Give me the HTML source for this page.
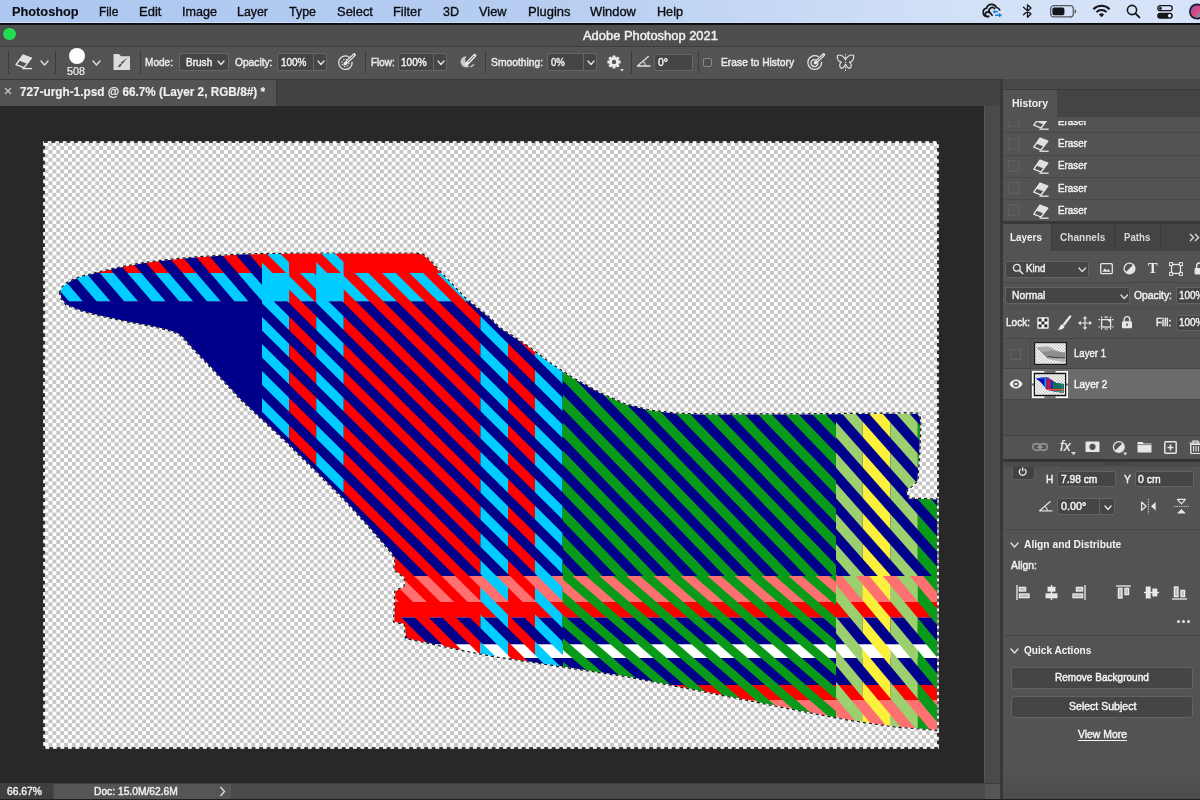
<!DOCTYPE html><html><head><meta charset="utf-8"><title>Adobe Photoshop 2021</title><style>
*{box-sizing:border-box;margin:0;padding:0}
html,body{width:1200px;height:800px;overflow:hidden;background:#535353;font-family:"Liberation Sans",sans-serif;color:#e4e4e4;font-size:11px}
.abs{position:absolute}
.t{position:absolute;white-space:nowrap;line-height:1;transform-origin:0 50%}
#menubar{position:absolute;left:0;top:0;width:1200px;height:23px;background:linear-gradient(90deg,#acc7f0 0%,#b6cdf1 45%,#d3e1f7 80%,#d6e3f8 100%);color:#111}
#menubar .t{font-size:13.2px;top:5px;color:#0c0c10}
#menuline{position:absolute;left:0;top:21.5px;width:1200px;height:3.5px;background:linear-gradient(#cfe0f8 0,#cfe0f8 40%,#0c0c10 46%,#141414 100%)}
#titlebar{position:absolute;left:0;top:25px;width:1200px;height:21px;background:#4e4e4e}
#optbar{position:absolute;left:0;top:46px;width:1200px;height:33px;background:#535353;border-top:1px solid #3e3e3e}
#tabbar{position:absolute;left:0;top:79px;width:1001px;height:27px;background:#434343;border-top:1px solid #3a3a3a}
#doctab{position:absolute;left:0;top:79px;width:277px;height:27px;background:#535353;border-right:1px solid #383838;border-top:1px solid #3a3a3a}
#canvasbg{position:absolute;left:0;top:106px;width:984px;height:677px;background:#282828}
#vscroll{position:absolute;left:984px;top:106px;width:17px;height:677px;background:#4a4a4a;border-left:1px solid #585858}
#statusbar{position:absolute;left:0;top:783px;width:1001px;height:17px;background:#4a4a4a;border-top:1px solid #3c3c3c}
#psep{position:absolute;left:1000px;top:79px;width:3px;height:721px;background:#383838}
.box{position:absolute;background:#454545;border:1px solid #666;border-radius:2px}
.sep{position:absolute;width:1px;background:#3d3d3d}
.hl{position:absolute;height:1px;background:#3f3f3f}


.ptabbar{position:absolute;left:1003px;width:197px;background:#444}
.ptab{position:absolute;background:#535353}
.hrow{position:absolute;left:1003px;width:197px;height:22px;border-bottom:1px solid #4a4a4a}
.hchk{position:absolute;left:1008px;width:12px;height:12px;border:1px solid #606060;background:#545454}
.ibox{position:absolute;background:#454545;border:1px solid #636363;border-radius:2px}
.btn{position:absolute;left:1011px;width:182px;height:22px;background:#454545;border:1px solid #626262;border-radius:3px}
</style></head><body>
<div id="canvasbg"></div>
<svg id="art" width="1000" height="800" viewBox="0 0 1000 800" style="position:absolute;left:0;top:0">
<defs>
<pattern id="chk" width="7.8" height="7.8" patternUnits="userSpaceOnUse" x="44.6" y="142.2"><rect width="7.8" height="7.8" fill="#fff"/><rect width="3.9" height="3.9" x="3.9" fill="#c6c6c6"/><rect width="3.9" height="3.9" y="3.9" fill="#c6c6c6"/></pattern>
<clipPath id="shape"><path d="M59.5,293.0 L61.0,288.0 L66.0,283.0 L77.0,277.5 L97.5,272.0 L120.0,267.0 L143.8,262.5 L168.8,259.4 L193.8,257.0 L240.0,254.0 L300.0,253.0 L415.0,253.0 L423.0,254.0 L430.0,260.0 L440.0,271.0 L465.0,297.5 L490.0,317.5 L500.0,327.5 L525.0,343.8 L550.0,362.5 L562.5,371.0 L575.0,378.8 L600.0,392.5 L625.0,403.8 L650.0,410.0 L675.0,413.0 L700.0,413.8 L800.0,413.8 L917.0,412.8 L920.0,416.0 L921.0,422.0 L920.0,450.0 L918.0,481.0 L907.0,491.0 L909.0,498.0 L938.0,499.0 L938.0,730.5 L895.0,727.0 L850.0,720.5 L805.0,712.0 L760.0,703.0 L715.0,694.0 L625.0,676.5 L562.0,667.0 L490.0,656.0 L445.0,647.0 L405.5,638.6 L404.3,624.4 L393.6,622.0 L394.8,591.0 L404.3,586.0 L404.3,578.0 L393.6,569.8 L394.8,560.0 L391.2,553.0 L367.5,525.8 L343.8,499.7 L320.0,476.0 L283.5,440.0 L240.0,399.5 L210.0,367.0 L188.8,344.8 L182.5,337.5 L177.5,333.8 L169.0,330.6 L150.0,326.0 L130.0,322.5 L100.0,316.0 L81.0,311.0 L66.0,305.0 L61.0,298.8Z"/></clipPath>
<clipPath id="r30_200"><rect x="30" y="200" width="232" height="560"/></clipPath>
<clipPath id="r262_200"><rect x="262" y="200" width="301" height="560"/></clipPath>
<clipPath id="r563_200"><rect x="563" y="200" width="273" height="376"/></clipPath>
<clipPath id="r563_576"><rect x="563" y="576" width="273" height="184"/></clipPath>
<clipPath id="r836_200"><rect x="836" y="200" width="124" height="376"/></clipPath>
<clipPath id="r836_576"><rect x="836" y="576" width="124" height="184"/></clipPath>
<mask id="warpmask" maskUnits="userSpaceOnUse" x="0" y="200" width="1000" height="600">
<rect x="0" y="200" width="1000" height="600" fill="#fff"/>
<g clip-path="url(#r30_200)">
<polygon points="30,768.3 262,1037.4 262,1021.4 30,752.3" fill="#000"/>
<polygon points="30,736.3 262,1005.4 262,989.4 30,720.3" fill="#000"/>
<polygon points="30,704.3 262,973.4 262,957.4 30,688.3" fill="#000"/>
<polygon points="30,672.3 262,941.4 262,925.4 30,656.2" fill="#000"/>
<polygon points="30,640.2 262,909.4 262,893.4 30,624.2" fill="#000"/>
<polygon points="30,608.2 262,877.3 262,861.3 30,592.2" fill="#000"/>
<polygon points="30,576.2 262,845.3 262,829.3 30,560.2" fill="#000"/>
<polygon points="30,544.2 262,813.3 262,797.3 30,528.2" fill="#000"/>
<polygon points="30,512.2 262,781.3 262,765.3 30,496.2" fill="#000"/>
<polygon points="30,480.2 262,749.3 262,733.3 30,464.2" fill="#000"/>
<polygon points="30,448.1 262,717.3 262,701.3 30,432.1" fill="#000"/>
<polygon points="30,416.1 262,685.2 262,669.2 30,400.1" fill="#000"/>
<polygon points="30,384.1 262,653.2 262,637.2 30,368.1" fill="#000"/>
<polygon points="30,352.1 262,621.2 262,605.2 30,336.1" fill="#000"/>
<polygon points="30,320.1 262,589.2 262,573.2 30,304.1" fill="#000"/>
<polygon points="30,288.1 262,557.2 262,541.2 30,272.1" fill="#000"/>
<polygon points="30,256.1 262,525.2 262,509.2 30,240.0" fill="#000"/>
<polygon points="30,224.0 262,493.2 262,477.1 30,208.0" fill="#000"/>
<polygon points="30,192.0 262,461.1 262,445.1 30,176.0" fill="#000"/>
<polygon points="30,160.0 262,429.1 262,413.1 30,144.0" fill="#000"/>
<polygon points="30,128.0 262,397.1 262,381.1 30,112.0" fill="#000"/>
<polygon points="30,96.0 262,365.1 262,349.1 30,80.0" fill="#000"/>
<polygon points="30,64.0 262,333.1 262,317.1 30,47.9" fill="#000"/>
<polygon points="30,31.9 262,301.1 262,285.1 30,15.9" fill="#000"/>
<polygon points="30,-0.1 262,269.0 262,253.0 30,-16.1" fill="#000"/>
<polygon points="30,-32.1 262,237.0 262,221.0 30,-48.1" fill="#000"/>
<polygon points="30,-64.1 262,205.0 262,189.0 30,-80.1" fill="#000"/>
</g>
<g clip-path="url(#r262_200)">
<polygon points="262,750.9 563,1048.9 563,1035.3 262,737.3" fill="#000"/>
<polygon points="262,723.8 563,1021.8 563,1008.2 262,710.2" fill="#000"/>
<polygon points="262,696.6 563,994.6 563,981.1 262,683.1" fill="#000"/>
<polygon points="262,669.5 563,967.5 563,953.9 262,656.0" fill="#000"/>
<polygon points="262,642.4 563,940.4 563,926.8 262,628.8" fill="#000"/>
<polygon points="262,615.3 563,913.3 563,899.7 262,601.7" fill="#000"/>
<polygon points="262,588.1 563,886.1 563,872.6 262,574.6" fill="#000"/>
<polygon points="262,561.0 563,859.0 563,845.4 262,547.4" fill="#000"/>
<polygon points="262,533.9 563,831.9 563,818.3 262,520.3" fill="#000"/>
<polygon points="262,506.8 563,804.7 563,791.2 262,493.2" fill="#000"/>
<polygon points="262,479.6 563,777.6 563,764.1 262,466.1" fill="#000"/>
<polygon points="262,452.5 563,750.5 563,736.9 262,438.9" fill="#000"/>
<polygon points="262,425.4 563,723.4 563,709.8 262,411.8" fill="#000"/>
<polygon points="262,398.3 563,696.2 563,682.7 262,384.7" fill="#000"/>
<polygon points="262,371.1 563,669.1 563,655.6 262,357.6" fill="#000"/>
<polygon points="262,344.0 563,642.0 563,628.4 262,330.4" fill="#000"/>
<polygon points="262,316.9 563,614.9 563,601.3 262,303.3" fill="#000"/>
<polygon points="262,289.8 563,587.7 563,574.2 262,276.2" fill="#000"/>
<polygon points="262,262.6 563,560.6 563,547.1 262,249.1" fill="#000"/>
<polygon points="262,235.5 563,533.5 563,519.9 262,221.9" fill="#000"/>
<polygon points="262,208.4 563,506.4 563,492.8 262,194.8" fill="#000"/>
<polygon points="262,181.2 563,479.2 563,465.7 262,167.7" fill="#000"/>
<polygon points="262,154.1 563,452.1 563,438.5 262,140.6" fill="#000"/>
<polygon points="262,127.0 563,425.0 563,411.4 262,113.4" fill="#000"/>
<polygon points="262,99.9 563,397.9 563,384.3 262,86.3" fill="#000"/>
<polygon points="262,72.7 563,370.7 563,357.2 262,59.2" fill="#000"/>
<polygon points="262,45.6 563,343.6 563,330.0 262,32.1" fill="#000"/>
<polygon points="262,18.5 563,316.5 563,302.9 262,4.9" fill="#000"/>
<polygon points="262,-8.6 563,289.4 563,275.8 262,-22.2" fill="#000"/>
<polygon points="262,-35.8 563,262.2 563,248.7 262,-49.3" fill="#000"/>
<polygon points="262,-62.9 563,235.1 563,221.5 262,-76.4" fill="#000"/>
<polygon points="262,-90.0 563,208.0 563,194.4 262,-103.6" fill="#000"/>
</g>
<g clip-path="url(#r563_200)">
<polygon points="563,563.0 836,845.6 836,831.6 563,549.0" fill="#000"/>
<polygon points="563,535.0 836,817.5 836,803.5 563,521.0" fill="#000"/>
<polygon points="563,506.9 836,789.5 836,775.5 563,492.9" fill="#000"/>
<polygon points="563,478.9 836,761.4 836,747.4 563,464.9" fill="#000"/>
<polygon points="563,450.8 836,733.4 836,719.4 563,436.8" fill="#000"/>
<polygon points="563,422.8 836,705.3 836,691.3 563,408.8" fill="#000"/>
<polygon points="563,394.7 836,677.3 836,663.3 563,380.7" fill="#000"/>
<polygon points="563,366.7 836,649.3 836,635.2 563,352.7" fill="#000"/>
<polygon points="563,338.6 836,621.2 836,607.2 563,324.6" fill="#000"/>
<polygon points="563,310.6 836,593.2 836,579.1 563,296.6" fill="#000"/>
<polygon points="563,282.6 836,565.1 836,551.1 563,268.5" fill="#000"/>
<polygon points="563,254.5 836,537.1 836,523.0 563,240.5" fill="#000"/>
<polygon points="563,226.5 836,509.0 836,495.0 563,212.4" fill="#000"/>
<polygon points="563,198.4 836,481.0 836,466.9 563,184.4" fill="#000"/>
<polygon points="563,170.4 836,452.9 836,438.9 563,156.3" fill="#000"/>
<polygon points="563,142.3 836,424.9 836,410.8 563,128.3" fill="#000"/>
<polygon points="563,114.3 836,396.8 836,382.8 563,100.2" fill="#000"/>
<polygon points="563,86.2 836,368.8 836,354.7 563,72.2" fill="#000"/>
<polygon points="563,58.2 836,340.7 836,326.7 563,44.1" fill="#000"/>
<polygon points="563,30.1 836,312.7 836,298.6 563,16.1" fill="#000"/>
<polygon points="563,2.1 836,284.6 836,270.6 563,-12.0" fill="#000"/>
<polygon points="563,-26.0 836,256.6 836,242.5 563,-40.0" fill="#000"/>
<polygon points="563,-54.0 836,228.5 836,214.5 563,-68.1" fill="#000"/>
<polygon points="563,-82.1 836,200.5 836,186.5 563,-96.1" fill="#000"/>
</g>
<g clip-path="url(#r563_576)">
<polygon points="563,755.7 836,993.2 836,981.5 563,743.9" fill="#000"/>
<polygon points="563,732.2 836,969.7 836,958.0 563,720.5" fill="#000"/>
<polygon points="563,708.7 836,946.2 836,934.5 563,697.0" fill="#000"/>
<polygon points="563,685.2 836,922.7 836,911.0 563,673.5" fill="#000"/>
<polygon points="563,661.7 836,899.2 836,887.5 563,650.0" fill="#000"/>
<polygon points="563,638.2 836,875.7 836,864.0 563,626.5" fill="#000"/>
<polygon points="563,614.7 836,852.3 836,840.5 563,603.0" fill="#000"/>
<polygon points="563,591.3 836,828.8 836,817.0 563,579.5" fill="#000"/>
<polygon points="563,567.8 836,805.3 836,793.5 563,556.0" fill="#000"/>
<polygon points="563,544.3 836,781.8 836,770.0 563,532.5" fill="#000"/>
<polygon points="563,520.8 836,758.3 836,746.6 563,509.0" fill="#000"/>
<polygon points="563,497.3 836,734.8 836,723.1 563,485.6" fill="#000"/>
<polygon points="563,473.8 836,711.3 836,699.6 563,462.1" fill="#000"/>
<polygon points="563,450.3 836,687.8 836,676.1 563,438.6" fill="#000"/>
<polygon points="563,426.8 836,664.3 836,652.6 563,415.1" fill="#000"/>
<polygon points="563,403.3 836,640.8 836,629.1 563,391.6" fill="#000"/>
<polygon points="563,379.8 836,617.4 836,605.6 563,368.1" fill="#000"/>
<polygon points="563,356.4 836,593.9 836,582.1 563,344.6" fill="#000"/>
</g>
<g clip-path="url(#r836_200)">
<polygon points="836,574.6 960,714.7 960,699.5 836,559.3" fill="#000"/>
<polygon points="836,544.1 960,684.2 960,668.9 836,528.8" fill="#000"/>
<polygon points="836,513.6 960,653.7 960,638.4 836,498.3" fill="#000"/>
<polygon points="836,483.1 960,623.2 960,607.9 836,467.8" fill="#000"/>
<polygon points="836,452.6 960,592.7 960,577.4 836,437.3" fill="#000"/>
<polygon points="836,422.0 960,562.2 960,546.9 836,406.8" fill="#000"/>
<polygon points="836,391.5 960,531.6 960,516.4 836,376.3" fill="#000"/>
<polygon points="836,361.0 960,501.1 960,485.9 836,345.8" fill="#000"/>
<polygon points="836,330.5 960,470.6 960,455.4 836,315.3" fill="#000"/>
<polygon points="836,300.0 960,440.1 960,424.9 836,284.7" fill="#000"/>
<polygon points="836,269.5 960,409.6 960,394.4 836,254.2" fill="#000"/>
<polygon points="836,239.0 960,379.1 960,363.8 836,223.7" fill="#000"/>
<polygon points="836,208.5 960,348.6 960,333.3 836,193.2" fill="#000"/>
<polygon points="836,178.0 960,318.1 960,302.8 836,162.7" fill="#000"/>
<polygon points="836,147.5 960,287.6 960,272.3 836,132.2" fill="#000"/>
<polygon points="836,116.9 960,257.1 960,241.8 836,101.7" fill="#000"/>
<polygon points="836,86.4 960,226.6 960,211.3 836,71.2" fill="#000"/>
</g>
<g clip-path="url(#r836_576)">
<polygon points="836,746.6 960,895.4 960,879.2 836,730.4" fill="#000"/>
<polygon points="836,714.2 960,863.0 960,846.8 836,698.0" fill="#000"/>
<polygon points="836,681.8 960,830.6 960,814.4 836,665.6" fill="#000"/>
<polygon points="836,649.4 960,798.2 960,782.0 836,633.2" fill="#000"/>
<polygon points="836,617.0 960,765.8 960,749.6 836,600.8" fill="#000"/>
<polygon points="836,584.6 960,733.4 960,717.2 836,568.4" fill="#000"/>
<polygon points="836,552.2 960,701.0 960,684.8 836,536.0" fill="#000"/>
<polygon points="836,519.8 960,668.6 960,652.4 836,503.6" fill="#000"/>
<polygon points="836,487.4 960,636.2 960,620.0 836,471.2" fill="#000"/>
<polygon points="836,455.0 960,603.8 960,587.6 836,438.8" fill="#000"/>
</g>
</mask>
</defs>
<rect x="44" y="142" width="894" height="606" fill="url(#chk)"/>
<g clip-path="url(#shape)">
<rect x="0" y="200" width="1000" height="73" fill="#ff0000"/>
<rect x="0" y="273" width="1000" height="28.25" fill="#00ccff"/>
<rect x="0" y="301.25" width="1000" height="274.75" fill="#00008b"/>
<rect x="0" y="576" width="1000" height="26" fill="#ff7070"/>
<rect x="0" y="602" width="1000" height="15.5" fill="#ff0000"/>
<rect x="0" y="617.5" width="1000" height="27.0" fill="#00008b"/>
<rect x="0" y="644.5" width="1000" height="13.5" fill="#ffffff"/>
<rect x="0" y="658" width="1000" height="27" fill="#00008b"/>
<rect x="0" y="685" width="1000" height="15" fill="#ff0000"/>
<rect x="0" y="700" width="1000" height="60" fill="#ff7070"/>
<g mask="url(#warpmask)">
<rect x="0" y="200" width="262" height="600" fill="#00008b"/>
<rect x="262" y="200" width="27.25" height="600" fill="#00ccff"/>
<rect x="289.25" y="200" width="27.0" height="600" fill="#ff0000"/>
<rect x="316.25" y="200" width="27.5" height="600" fill="#00ccff"/>
<rect x="343.75" y="200" width="136.75" height="600" fill="#ff0000"/>
<rect x="480.5" y="200" width="27.5" height="600" fill="#00ccff"/>
<rect x="508" y="200" width="27" height="600" fill="#ff0000"/>
<rect x="535" y="200" width="27.5" height="600" fill="#00ccff"/>
<rect x="562.5" y="200" width="273.5" height="600" fill="#0a9a1a"/>
<rect x="836" y="200" width="26.600000000000023" height="600" fill="#9ccf6e"/>
<rect x="862.6" y="200" width="27.899999999999977" height="600" fill="#fbf03c"/>
<rect x="890.5" y="200" width="27.299999999999955" height="600" fill="#9ccf6e"/>
<rect x="917.8" y="200" width="42.200000000000045" height="600" fill="#0a9a1a"/>
</g></g>
<rect x="44" y="142" width="894" height="606" fill="none" stroke="#fff" stroke-width="1.6"/>
<rect x="44" y="142" width="894" height="606" fill="none" stroke="#000" stroke-width="1.6" stroke-dasharray="3.75 3.75"/>
<path d="M59.5,293.0 L61.0,288.0 L66.0,283.0 L77.0,277.5 L97.5,272.0 L120.0,267.0 L143.8,262.5 L168.8,259.4 L193.8,257.0 L240.0,254.0 L300.0,253.0 L415.0,253.0 L423.0,254.0 L430.0,260.0 L440.0,271.0 L465.0,297.5 L490.0,317.5 L500.0,327.5 L525.0,343.8 L550.0,362.5 L562.5,371.0 L575.0,378.8 L600.0,392.5 L625.0,403.8 L650.0,410.0 L675.0,413.0 L700.0,413.8 L800.0,413.8 L917.0,412.8 L920.0,416.0 L921.0,422.0 L920.0,450.0 L918.0,481.0 L907.0,491.0 L909.0,498.0 L938.0,499.0 L938.0,730.5 L895.0,727.0 L850.0,720.5 L805.0,712.0 L760.0,703.0 L715.0,694.0 L625.0,676.5 L562.0,667.0 L490.0,656.0 L445.0,647.0 L405.5,638.6 L404.3,624.4 L393.6,622.0 L394.8,591.0 L404.3,586.0 L404.3,578.0 L393.6,569.8 L394.8,560.0 L391.2,553.0 L367.5,525.8 L343.8,499.7 L320.0,476.0 L283.5,440.0 L240.0,399.5 L210.0,367.0 L188.8,344.8 L182.5,337.5 L177.5,333.8 L169.0,330.6 L150.0,326.0 L130.0,322.5 L100.0,316.0 L81.0,311.0 L66.0,305.0 L61.0,298.8Z" fill="none" stroke="#fff" stroke-width="1.2"/>
<path d="M59.5,293.0 L61.0,288.0 L66.0,283.0 L77.0,277.5 L97.5,272.0 L120.0,267.0 L143.8,262.5 L168.8,259.4 L193.8,257.0 L240.0,254.0 L300.0,253.0 L415.0,253.0 L423.0,254.0 L430.0,260.0 L440.0,271.0 L465.0,297.5 L490.0,317.5 L500.0,327.5 L525.0,343.8 L550.0,362.5 L562.5,371.0 L575.0,378.8 L600.0,392.5 L625.0,403.8 L650.0,410.0 L675.0,413.0 L700.0,413.8 L800.0,413.8 L917.0,412.8 L920.0,416.0 L921.0,422.0 L920.0,450.0 L918.0,481.0 L907.0,491.0 L909.0,498.0 L938.0,499.0 L938.0,730.5 L895.0,727.0 L850.0,720.5 L805.0,712.0 L760.0,703.0 L715.0,694.0 L625.0,676.5 L562.0,667.0 L490.0,656.0 L445.0,647.0 L405.5,638.6 L404.3,624.4 L393.6,622.0 L394.8,591.0 L404.3,586.0 L404.3,578.0 L393.6,569.8 L394.8,560.0 L391.2,553.0 L367.5,525.8 L343.8,499.7 L320.0,476.0 L283.5,440.0 L240.0,399.5 L210.0,367.0 L188.8,344.8 L182.5,337.5 L177.5,333.8 L169.0,330.6 L150.0,326.0 L130.0,322.5 L100.0,316.0 L81.0,311.0 L66.0,305.0 L61.0,298.8Z" fill="none" stroke="#111" stroke-width="1.2" stroke-dasharray="3 3"/>
</svg>
<div id="menubar">
<span class="t" style="left:12.3px;top:5px;font-size:13.2px;font-weight:700;color:#0c0c10;-webkit-text-stroke:0.15px;transform:scaleX(0.9679);">Photoshop</span>
<span class="t" style="left:99px;top:5px;font-size:13.2px;font-weight:400;color:#0c0c10;-webkit-text-stroke:0.35px;transform:scaleX(0.9074);">File</span>
<span class="t" style="left:139.3px;top:5px;font-size:13.2px;font-weight:400;color:#0c0c10;-webkit-text-stroke:0.35px;transform:scaleX(0.9848);">Edit</span>
<span class="t" style="left:181.7px;top:5px;font-size:13.2px;font-weight:400;color:#0c0c10;-webkit-text-stroke:0.35px;transform:scaleX(0.9541);">Image</span>
<span class="t" style="left:236.7px;top:5px;font-size:13.2px;font-weight:400;color:#0c0c10;-webkit-text-stroke:0.35px;transform:scaleX(0.9389);">Layer</span>
<span class="t" style="left:289px;top:5px;font-size:13.2px;font-weight:400;color:#0c0c10;-webkit-text-stroke:0.35px;transform:scaleX(0.9435);">Type</span>
<span class="t" style="left:336.7px;top:5px;font-size:13.2px;font-weight:400;color:#0c0c10;-webkit-text-stroke:0.35px;transform:scaleX(0.9813);">Select</span>
<span class="t" style="left:393px;top:5px;font-size:13.2px;font-weight:400;color:#0c0c10;-webkit-text-stroke:0.35px;transform:scaleX(0.9717);">Filter</span>
<span class="t" style="left:443px;top:5px;font-size:13.2px;font-weight:400;color:#0c0c10;-webkit-text-stroke:0.35px;transform:scaleX(0.9482);">3D</span>
<span class="t" style="left:479px;top:5px;font-size:13.2px;font-weight:400;color:#0c0c10;-webkit-text-stroke:0.35px;transform:scaleX(0.9693);">View</span>
<span class="t" style="left:527.5px;top:5px;font-size:13.2px;font-weight:400;color:#0c0c10;-webkit-text-stroke:0.35px;transform:scaleX(0.9817);">Plugins</span>
<span class="t" style="left:590px;top:5px;font-size:13.2px;font-weight:400;color:#0c0c10;-webkit-text-stroke:0.35px;transform:scaleX(0.9798);">Window</span>
<span class="t" style="left:656.5px;top:5px;font-size:13.2px;font-weight:400;color:#0c0c10;-webkit-text-stroke:0.35px;transform:scaleX(0.9578);">Help</span>
<svg class="abs" style="left:981px;top:3px" width="24" height="17" viewBox="0 0 24 17"><g fill="none" stroke="#15151a" stroke-width="1.7" stroke-linecap="round"><path d="M6.2,13.6 a4.3,4.3 0 0 1 -0.6,-8.5 a5.2,5.2 0 0 1 9.8,-0.6 a4.2,4.2 0 0 1 3.3,2.4"/><path d="M13.5,5.5 a3.1,3.1 0 0 0 -5,3.6 l2.6,3.2"/><path d="M8.2,9.6 a2.3,2.3 0 1 0 -0.4,3.6"/></g><path d="M14,9.2h4v-1.6l3,2.4-3,2.4v-1.6h-4z" fill="#1a7fd0" transform="translate(0,2.2)"/><path d="M17,8.2h-3v-1.2l-2.4,1.9 2.4,1.9v-1.2h3z" fill="#1a7fd0" transform="translate(0,-0.2)"/></svg>
<svg class="abs" style="left:1021px;top:3px" width="13" height="16" viewBox="0 0 13 16"><path d="M2.5,4.3 L10,11 L6.5,14.2 V1.8 L10,5 L2.5,11.7" fill="none" stroke="#15151a" stroke-width="1.3" stroke-linejoin="round" stroke-linecap="round"/></svg>
<svg class="abs" style="left:1050px;top:5px" width="27" height="13" viewBox="0 0 27 13"><rect x="0.7" y="0.7" width="22.6" height="11.2" rx="3" fill="none" stroke="#55585f" stroke-width="1.2"/><rect x="2.4" y="2.4" width="12" height="7.8" rx="1.6" fill="#15151a"/><path d="M24.6,4.3 a2.3,2.3 0 0 1 0,4.4z" fill="#55585f"/></svg>
<svg class="abs" style="left:1092px;top:4px" width="19" height="14" viewBox="0 0 19 14"><g fill="none" stroke="#15151a" stroke-width="2" stroke-linecap="butt"><path d="M1.4,5.2 a11.4,11.4 0 0 1 16.2,0"/><path d="M4.4,8.1 a7.2,7.2 0 0 1 10.2,0"/></g><path d="M9.5,13.2 L6.9,10.5 a3.7,3.7 0 0 1 5.2,0z" fill="#15151a"/></svg>
<svg class="abs" style="left:1126px;top:4px" width="15" height="15" viewBox="0 0 15 15"><circle cx="6" cy="6" r="4.6" fill="none" stroke="#15151a" stroke-width="1.6"/><path d="M9.4,9.4 L13.4,13.4" stroke="#15151a" stroke-width="1.9" stroke-linecap="round"/></svg>
<svg class="abs" style="left:1157px;top:5px" width="16" height="14" viewBox="0 0 16 14"><rect x="0.7" y="0.7" width="14.6" height="5" rx="2.5" fill="none" stroke="#15151a" stroke-width="1.3"/><circle cx="3.4" cy="3.2" r="1.5" fill="#15151a"/><rect x="0.2" y="7.8" width="15.6" height="6" rx="3" fill="#15151a"/><circle cx="12.6" cy="10.8" r="1.7" fill="#e6eefb"/></svg>
<svg class="abs" style="left:1188px;top:3px" width="12" height="17" viewBox="0 0 12 17"><defs><linearGradient id="siri" x1="0" y1="0" x2="1" y2="1"><stop offset="0" stop-color="#7a4cc8"/><stop offset="0.5" stop-color="#e24a7a"/><stop offset="1" stop-color="#35c0e0"/></linearGradient></defs><circle cx="9" cy="8.5" r="8" fill="#1d1d2b"/><circle cx="9" cy="8.5" r="6.2" fill="url(#siri)"/></svg>
</div><div id="menuline"></div>
<div id="titlebar"></div>
<div class="abs" style="left:3.2px;top:28.1px;width:12.4px;height:12.4px;border-radius:50%;background:#22dc52;box-shadow:0 0 0 0.6px #5a3a50"></div>
<span class="t" style="left:582.5px;top:29.5px;font-size:12.4px;font-weight:400;color:#f0f0f0;-webkit-text-stroke:0.45px;transform:scaleX(1.0414);">Adobe Photoshop 2021</span>
<div id="optbar"></div>
<div class="sep" style="left:8px;top:51px;height:23px"></div>
<div class="sep" style="left:55px;top:51px;height:23px"></div>
<div class="sep" style="left:140px;top:51px;height:23px"></div>
<div class="sep" style="left:365px;top:51px;height:23px"></div>
<div class="sep" style="left:485px;top:51px;height:23px"></div>
<div class="sep" style="left:631px;top:51px;height:23px"></div>
<div class="sep" style="left:698px;top:51px;height:23px"></div>
<svg class="abs" style="left:15px;top:54px" width="18" height="16" viewBox="0 0 18 16"><path d="M8.2,1 L16.4,4.2 L9,13.6 L1,10.6 Z" fill="none" stroke="#ececec" stroke-width="1.3" stroke-linejoin="round"/><path d="M8.2,1 L16.4,4.2 L12,9.8 L4,6.6Z" fill="#e0e0e0"/><path d="M7.4,14.6 H17" stroke="#ececec" stroke-width="1.3"/></svg>
<svg class="abs" style="left:40px;top:60px" width="9" height="6" viewBox="-1 -1 9 6"><path d="M0,0 L3.5,4 L7,0" fill="none" stroke="#e0e0e0" stroke-width="1.4" stroke-linecap="round" stroke-linejoin="round"/></svg>
<div class="abs" style="left:68.5px;top:48px;width:16px;height:16px;border-radius:50%;background:#fff"></div>
<span class="t" style="left:67.3px;top:66px;font-size:10.8px;font-weight:400;color:#f0f0f0;-webkit-text-stroke:0.2px;transform:scaleX(0.9990);">508</span>
<svg class="abs" style="left:92px;top:60px" width="9" height="6" viewBox="-1 -1 9 6"><path d="M0,0 L3.5,4 L7,0" fill="none" stroke="#e0e0e0" stroke-width="1.4" stroke-linecap="round" stroke-linejoin="round"/></svg>
<svg class="abs" style="left:113px;top:53px" width="18" height="18" viewBox="0 0 18 18"><path d="M0.5,1 H6 L8,3.2 H17 V17 H0.5Z" fill="#dcdcdc"/><path d="M14.6,4.6 L9.3,11 L7.8,9.8Z M7.4,10.6 l1.3,1.1 c-0.6,1.6 -2.2,2.6 -4,2.5 c1.2,-0.8 1.3,-2.4 2.7,-3.6z" fill="#444"/></svg>
<span class="t" style="left:144.5px;top:56.5px;font-size:11.2px;font-weight:400;color:#ececec;-webkit-text-stroke:0.45px;transform:scaleX(0.8994);">Mode:</span>
<div class="box" style="left:179px;top:53px;width:50px;height:18px"></div>
<span class="t" style="left:186.25px;top:56.5px;font-size:11.2px;font-weight:400;color:#f0f0f0;-webkit-text-stroke:0.45px;transform:scaleX(0.8971);">Brush</span>
<svg class="abs" style="left:217px;top:60px" width="8" height="5.5" viewBox="-1 -1 8 5.5"><path d="M0,0 L3.0,3.5 L6,0" fill="none" stroke="#e0e0e0" stroke-width="1.4" stroke-linecap="round" stroke-linejoin="round"/></svg>
<span class="t" style="left:235px;top:56.5px;font-size:11.2px;font-weight:400;color:#ececec;-webkit-text-stroke:0.45px;transform:scaleX(0.9127);">Opacity:</span>
<div class="box" style="left:277px;top:53px;width:50px;height:18px"></div><div class="sep" style="left:313px;top:54px;height:16px;background:#666"></div>
<span class="t" style="left:281px;top:56.5px;font-size:11.2px;font-weight:400;color:#f0f0f0;-webkit-text-stroke:0.45px;transform:scaleX(0.8901);">100%</span>
<svg class="abs" style="left:316.5px;top:60px" width="8" height="5.5" viewBox="-1 -1 8 5.5"><path d="M0,0 L3.0,3.5 L6,0" fill="none" stroke="#e0e0e0" stroke-width="1.4" stroke-linecap="round" stroke-linejoin="round"/></svg>
<svg class="abs" style="left:337px;top:53px" width="20" height="19" viewBox="0 0 20 19"><g fill="none" stroke="#e4e4e4" stroke-width="1.3"><path d="M12.6,4.4 a6.75,6.75 0 1 0 2.5,4.4"/><circle cx="8.5" cy="9.9" r="3.6" stroke-dasharray="1.5 1.3" stroke-width="1.1"/></g><path d="M17.2,1.8 L8.2,10.6" stroke="#e8e8e8" stroke-width="3.2" stroke-linecap="round"/><path d="M16.6,2.4 L10.4,8.4" stroke="#535353" stroke-width="1" stroke-linecap="round"/><path d="M6.2,12.6 L7.6,9.6 L9.4,11.4Z" fill="#e8e8e8"/></svg>
<span class="t" style="left:370.75px;top:56.5px;font-size:11.2px;font-weight:400;color:#ececec;-webkit-text-stroke:0.45px;transform:scaleX(0.8874);">Flow:</span>
<div class="box" style="left:398px;top:53px;width:49px;height:18px"></div><div class="sep" style="left:433px;top:54px;height:16px;background:#666"></div>
<span class="t" style="left:401.25px;top:56.5px;font-size:11.2px;font-weight:400;color:#f0f0f0;-webkit-text-stroke:0.45px;transform:scaleX(0.8988);">100%</span>
<svg class="abs" style="left:436.5px;top:60px" width="8" height="5.5" viewBox="-1 -1 8 5.5"><path d="M0,0 L3.0,3.5 L6,0" fill="none" stroke="#e0e0e0" stroke-width="1.4" stroke-linecap="round" stroke-linejoin="round"/></svg>
<svg class="abs" style="left:457px;top:53px" width="20" height="19" viewBox="0 0 20 19"><path d="M9.4,3.2 a5.6,5.6 0 1 0 3,10.2 a6.6,6.6 0 0 1 -3,-10.2z" fill="#c8c8c8"/><path d="M17.6,2.6 L9.6,11" stroke="#e8e8e8" stroke-width="3.4" stroke-linecap="round"/><path d="M17,3.2 L11.6,8.8" stroke="#535353" stroke-width="1" stroke-linecap="round"/><path d="M7.2,13.6 L8.8,10 L11,12Z" fill="#e8e8e8"/><path d="M13.4,13.8 q2.2,-0.6 3.4,-2.6" stroke="#e0e0e0" stroke-width="1.2" fill="none"/></svg>
<span class="t" style="left:490.75px;top:56.5px;font-size:11.2px;font-weight:400;color:#ececec;-webkit-text-stroke:0.45px;transform:scaleX(0.9221);">Smoothing:</span>
<div class="box" style="left:547px;top:53px;width:50px;height:18px"></div><div class="sep" style="left:583px;top:54px;height:16px;background:#666"></div>
<span class="t" style="left:551.25px;top:56.5px;font-size:11.2px;font-weight:400;color:#f0f0f0;-webkit-text-stroke:0.45px;transform:scaleX(0.8493);">0%</span>
<svg class="abs" style="left:586.5px;top:60px" width="8" height="5.5" viewBox="-1 -1 8 5.5"><path d="M0,0 L3.0,3.5 L6,0" fill="none" stroke="#e0e0e0" stroke-width="1.4" stroke-linecap="round" stroke-linejoin="round"/></svg>
<svg class="abs" style="left:607px;top:55px" width="14" height="14" viewBox="-7 -7 14 14"><g fill="#ececec"><rect x="-1.5" y="-6.6" width="3" height="3.6" rx="0.5" transform="rotate(0)"/><rect x="-1.5" y="-6.6" width="3" height="3.6" rx="0.5" transform="rotate(45)"/><rect x="-1.5" y="-6.6" width="3" height="3.6" rx="0.5" transform="rotate(90)"/><rect x="-1.5" y="-6.6" width="3" height="3.6" rx="0.5" transform="rotate(135)"/><rect x="-1.5" y="-6.6" width="3" height="3.6" rx="0.5" transform="rotate(180)"/><rect x="-1.5" y="-6.6" width="3" height="3.6" rx="0.5" transform="rotate(225)"/><rect x="-1.5" y="-6.6" width="3" height="3.6" rx="0.5" transform="rotate(270)"/><rect x="-1.5" y="-6.6" width="3" height="3.6" rx="0.5" transform="rotate(315)"/></g><circle r="3.5" fill="none" stroke="#ececec" stroke-width="2.6"/></svg>
<svg class="abs" style="left:619.5px;top:68.5px" width="4" height="3" viewBox="0 0 5 4"><path d="M0,0H5L2.5,3.4Z" fill="#e0e0e0"/></svg>
<svg class="abs" style="left:636px;top:55px" width="15" height="13" viewBox="0 0 15 13"><path d="M12.4,1.6 L1.4,11 H14" fill="none" stroke="#e0e0e0" stroke-width="1.3" stroke-linejoin="round" stroke-linecap="round"/><path d="M7,6.4 a6,6 0 0 1 2.4,4.4" fill="none" stroke="#e0e0e0" stroke-width="1.1"/></svg>
<div class="box" style="left:654px;top:54px;width:39px;height:17px"></div>
<span class="t" style="left:658px;top:56.5px;font-size:11.2px;font-weight:400;color:#f0f0f0;-webkit-text-stroke:0.45px;transform:scaleX(0.9338);">0°</span>
<div class="abs" style="left:703px;top:57.5px;width:9px;height:9px;border:1px solid #8a8a8a;border-radius:2px;background:#4d4d4d"></div>
<span class="t" style="left:720.5px;top:56.5px;font-size:11.2px;font-weight:400;color:#ececec;-webkit-text-stroke:0.45px;transform:scaleX(0.9193);">Erase to History</span>
<svg class="abs" style="left:805px;top:53px" width="21" height="19" viewBox="0 0 21 19"><g fill="none" stroke="#e4e4e4" stroke-width="1.3"><path d="M13.6,3.8 a6.9,6.9 0 1 0 3,5"/><path d="M11,7 a3.5,3.5 0 1 0 1.9,2.6"/></g><path d="M18.6,1.8 L10.4,9.6" stroke="#e8e8e8" stroke-width="3.2" stroke-linecap="round"/><path d="M18,2.4 L12.4,7.8" stroke="#535353" stroke-width="1" stroke-linecap="round"/><path d="M8.4,11.6 L9.6,8.6 L11.4,10.4Z" fill="#e8e8e8"/></svg>
<svg class="abs" style="left:836px;top:53px" width="19" height="19" viewBox="0 0 19 19"><g fill="none" stroke="#e0e0e0" stroke-width="1.2" stroke-linejoin="round"><path d="M9.5,6.5 C7.5,2.5 3.4,1.2 1.4,2.6 C1,6 2.6,8.6 5.4,9.2 C3.4,10.2 3,13.6 5.2,15.4 C7.4,15 8.8,13.2 9.5,11"/><path d="M9.5,6.5 C11.5,2.5 15.6,1.2 17.6,2.6 C18,6 16.4,8.6 13.6,9.2 C15.6,10.2 16,13.6 13.8,15.4 C11.6,15 10.2,13.2 9.5,11"/></g><path d="M9.5,1 V18" stroke="#e0e0e0" stroke-width="1" stroke-dasharray="1.4 1.2"/></svg>
<div id="tabbar"></div><div id="doctab"></div>
<svg class="abs" style="left:4px;top:87px" width="8" height="8" viewBox="0 0 8 8"><path d="M1,1L7,7M7,1L1,7" stroke="#d0d0d0" stroke-width="1.1"/></svg>
<span class="t" style="left:19.5px;top:85.8px;font-size:12px;font-weight:700;color:#f0f0f0;-webkit-text-stroke:0.15px;transform:scaleX(0.9808);">727-urgh-1.psd @ 66.7% (Layer 2, RGB/8#) *</span>
<div id="vscroll"></div>
<div id="statusbar"></div>
<div class="abs" style="left:0;top:784px;width:53px;height:16px;background:#3f3f3f"></div>
<div class="abs" style="left:54px;top:784px;width:177px;height:16px;background:#555"></div>
<span class="t" style="left:7px;top:785.8px;font-size:11px;font-weight:400;color:#f0f0f0;-webkit-text-stroke:0.45px;transform:scaleX(0.9382);">66.67%</span>
<span class="t" style="left:93.75px;top:785.8px;font-size:11px;font-weight:400;color:#f0f0f0;-webkit-text-stroke:0.45px;transform:scaleX(0.9319);">Doc: 15.0M/62.6M</span>
<svg class="abs" style="left:219px;top:786px" width="7" height="11" viewBox="0 0 7 11"><path d="M1.5,1 L5.5,5.5 L1.5,10" fill="none" stroke="#e0e0e0" stroke-width="1.3"/></svg>
<div id="psep"></div>
<div class="abs" style="left:1003px;top:79px;width:197px;height:11px;background:#484848;border-bottom:1px solid #3a3a3a"></div>
<div class="ptabbar" style="top:90px;height:27px"></div>
<div class="ptab" style="left:1003px;top:90px;width:54px;height:27px"></div>
<div class="abs" style="left:1003px;top:117px;width:197px;height:104px;background:#535353;overflow:hidden"></div>
<span class="t" style="left:1011.6px;top:97.8px;font-size:11.2px;font-weight:700;color:#f4f4f4;transform:scaleX(0.9328);">History</span>
<div class="abs" style="left:1003px;top:120.5px;width:197px;height:100.5px;overflow:hidden">
<div class="abs" style="left:0;top:11.599999999999994px;width:197px;height:1px;background:#494949"></div>
<div class="abs" style="left:5px;top:-5.400000000000006px;width:12px;height:12px;border:1px solid #5f5f5f;background:#555"></div>
<svg class="abs" style="left:30px;top:-5.7000000000000055px" width="16" height="15" viewBox="0 0 16 15"><path d="M7,1.2 L14.8,4.2 L8,13 L0.8,10.2 Z" fill="none" stroke="#ececec" stroke-width="1.3" stroke-linejoin="round"/><path d="M7,1.2 L14.8,4.2 L10.6,9.6 L3.2,6.4Z" fill="#e0e0e0"/><path d="M6.4,14.2 H15.6" stroke="#ececec" stroke-width="1.3"/></svg>
<span class="t" style="left:55px;top:-4.7000000000000055px;font-size:11.2px;font-weight:400;color:#f0f0f0;-webkit-text-stroke:0.45px;transform:scaleX(0.8791);">Eraser</span>
<div class="abs" style="left:0;top:34.0px;width:197px;height:1px;background:#494949"></div>
<div class="abs" style="left:5px;top:17.0px;width:12px;height:12px;border:1px solid #5f5f5f;background:#555"></div>
<svg class="abs" style="left:30px;top:16.7px" width="16" height="15" viewBox="0 0 16 15"><path d="M7,1.2 L14.8,4.2 L8,13 L0.8,10.2 Z" fill="none" stroke="#ececec" stroke-width="1.3" stroke-linejoin="round"/><path d="M7,1.2 L14.8,4.2 L10.6,9.6 L3.2,6.4Z" fill="#e0e0e0"/><path d="M6.4,14.2 H15.6" stroke="#ececec" stroke-width="1.3"/></svg>
<span class="t" style="left:55px;top:17.7px;font-size:11.2px;font-weight:400;color:#f0f0f0;-webkit-text-stroke:0.45px;transform:scaleX(0.8791);">Eraser</span>
<div class="abs" style="left:0;top:56.0px;width:197px;height:1px;background:#494949"></div>
<div class="abs" style="left:5px;top:39.0px;width:12px;height:12px;border:1px solid #5f5f5f;background:#555"></div>
<svg class="abs" style="left:30px;top:38.7px" width="16" height="15" viewBox="0 0 16 15"><path d="M7,1.2 L14.8,4.2 L8,13 L0.8,10.2 Z" fill="none" stroke="#ececec" stroke-width="1.3" stroke-linejoin="round"/><path d="M7,1.2 L14.8,4.2 L10.6,9.6 L3.2,6.4Z" fill="#e0e0e0"/><path d="M6.4,14.2 H15.6" stroke="#ececec" stroke-width="1.3"/></svg>
<span class="t" style="left:55px;top:39.7px;font-size:11.2px;font-weight:400;color:#f0f0f0;-webkit-text-stroke:0.45px;transform:scaleX(0.8791);">Eraser</span>
<div class="abs" style="left:0;top:78.4px;width:197px;height:1px;background:#494949"></div>
<div class="abs" style="left:5px;top:61.400000000000006px;width:12px;height:12px;border:1px solid #5f5f5f;background:#555"></div>
<svg class="abs" style="left:30px;top:61.10000000000001px" width="16" height="15" viewBox="0 0 16 15"><path d="M7,1.2 L14.8,4.2 L8,13 L0.8,10.2 Z" fill="none" stroke="#ececec" stroke-width="1.3" stroke-linejoin="round"/><path d="M7,1.2 L14.8,4.2 L10.6,9.6 L3.2,6.4Z" fill="#e0e0e0"/><path d="M6.4,14.2 H15.6" stroke="#ececec" stroke-width="1.3"/></svg>
<span class="t" style="left:55px;top:62.10000000000001px;font-size:11.2px;font-weight:400;color:#f0f0f0;-webkit-text-stroke:0.45px;transform:scaleX(0.8791);">Eraser</span>
<div class="abs" style="left:0;top:100.4px;width:197px;height:1px;background:#494949"></div>
<div class="abs" style="left:5px;top:83.4px;width:12px;height:12px;border:1px solid #5f5f5f;background:#555"></div>
<svg class="abs" style="left:30px;top:83.10000000000001px" width="16" height="15" viewBox="0 0 16 15"><path d="M7,1.2 L14.8,4.2 L8,13 L0.8,10.2 Z" fill="none" stroke="#ececec" stroke-width="1.3" stroke-linejoin="round"/><path d="M7,1.2 L14.8,4.2 L10.6,9.6 L3.2,6.4Z" fill="#e0e0e0"/><path d="M6.4,14.2 H15.6" stroke="#ececec" stroke-width="1.3"/></svg>
<span class="t" style="left:55px;top:84.10000000000001px;font-size:11.2px;font-weight:400;color:#f0f0f0;-webkit-text-stroke:0.45px;transform:scaleX(0.8791);">Eraser</span>
</div>
<div class="abs" style="left:1003px;top:221px;width:197px;height:3px;background:#383838"></div>
<div class="ptabbar" style="top:224px;height:27px"></div>
<div class="ptab" style="left:1003px;top:224px;width:48px;height:27px"></div>
<div class="abs" style="left:1051px;top:224px;width:1px;height:27px;background:#383838"></div>
<div class="abs" style="left:1114px;top:224px;width:1px;height:26px;background:#383838"></div>
<div class="abs" style="left:1160px;top:224px;width:1px;height:26px;background:#383838"></div>
<span class="t" style="left:1009.6px;top:231.8px;font-size:11.2px;font-weight:700;color:#f4f4f4;transform:scaleX(0.8859);">Layers</span>
<span class="t" style="left:1059.6px;top:231.8px;font-size:11.2px;font-weight:700;color:#d8d8d8;transform:scaleX(0.9005);">Channels</span>
<span class="t" style="left:1123.6px;top:231.8px;font-size:11.2px;font-weight:700;color:#d8d8d8;transform:scaleX(0.8655);">Paths</span>
<svg class="abs" style="left:1189px;top:233px" width="11" height="9" viewBox="0 0 11 9"><path d="M1,1 L4.6,4.5 L1,8 M6,1 L9.6,4.5 L6,8" fill="none" stroke="#e0e0e0" stroke-width="1.3"/></svg>
<div class="ibox" style="left:1004.5px;top:261px;width:84.5px;height:16.5px"></div>
<svg class="abs" style="left:1012px;top:263px" width="12" height="12" viewBox="0 0 12 12"><circle cx="4.8" cy="4.8" r="3.4" fill="none" stroke="#e6e6e6" stroke-width="1.3"/><path d="M7.4,7.4 L10.8,10.8" stroke="#e6e6e6" stroke-width="1.5" stroke-linecap="round"/></svg>
<span class="t" style="left:1025.6px;top:262.8px;font-size:11.2px;font-weight:400;color:#f0f0f0;-webkit-text-stroke:0.45px;transform:scaleX(0.8653);">Kind</span>
<svg class="abs" style="left:1078px;top:267px" width="8.5" height="5.6" viewBox="-1 -1 8.5 5.6"><path d="M0,0 L3.25,3.6 L6.5,0" fill="none" stroke="#e0e0e0" stroke-width="1.4" stroke-linecap="round" stroke-linejoin="round"/></svg>
<svg class="abs" style="left:1100px;top:263px" width="13" height="12" viewBox="0 0 13 12"><rect x="0.7" y="0.7" width="11.6" height="10" rx="1.2" fill="none" stroke="#e6e6e6" stroke-width="1.3"/><path d="M2.4,8.8 L5,5.2 L6.8,7.4 L8.4,6 L10.6,8.8Z" fill="#e6e6e6"/></svg>
<svg class="abs" style="left:1123px;top:262px" width="13" height="13" viewBox="0 0 13 13"><circle cx="6.5" cy="6.5" r="5.4" fill="none" stroke="#e6e6e6" stroke-width="1.3"/><path d="M2.7,10.3 A5.4,5.4 0 0 0 10.3,2.7Z" fill="#e6e6e6"/></svg>
<span class="t" style="left:1148px;top:260.8px;font-size:14.5px;font-weight:700;color:#ececec;transform:scaleX(0.9926);font-family:'Liberation Serif',serif;">T</span>
<svg class="abs" style="left:1169px;top:262px" width="14" height="14" viewBox="0 0 14 14"><rect x="2.5" y="2.5" width="9" height="9" fill="none" stroke="#e6e6e6" stroke-width="1.3"/><g fill="#535353" stroke="#e6e6e6" stroke-width="1"><rect x="0.6" y="0.6" width="3" height="3"/><rect x="10.4" y="0.6" width="3" height="3"/><rect x="0.6" y="10.4" width="3" height="3"/><rect x="10.4" y="10.4" width="3" height="3"/></g></svg>
<svg class="abs" style="left:1194px;top:262px" width="8" height="13" viewBox="0 0 8 13"><path d="M2.6,6 V4 a3,3 0 0 1 6,0" fill="none" stroke="#e6e6e6" stroke-width="1.3"/><rect x="0.6" y="6" width="10" height="6.4" rx="1" fill="#e6e6e6"/></svg>
<div class="hl" style="left:1003px;top:282px;width:197px;background:#474747"></div>
<div class="hl" style="left:1003px;top:308px;width:197px;background:#4b4b4b"></div>
<div class="ibox" style="left:1005px;top:287px;width:125px;height:17px"></div>
<span class="t" style="left:1011.6px;top:289.8px;font-size:11.2px;font-weight:400;color:#f0f0f0;-webkit-text-stroke:0.45px;transform:scaleX(0.9253);">Normal</span>
<svg class="abs" style="left:1119.5px;top:294px" width="8.5" height="5.6" viewBox="-1 -1 8.5 5.6"><path d="M0,0 L3.25,3.6 L6.5,0" fill="none" stroke="#e0e0e0" stroke-width="1.4" stroke-linecap="round" stroke-linejoin="round"/></svg>
<span class="t" style="left:1134px;top:289.8px;font-size:11.2px;font-weight:400;color:#f0f0f0;-webkit-text-stroke:0.45px;transform:scaleX(0.9249);">Opacity:</span>
<div class="ibox" style="left:1176px;top:287px;width:30px;height:17px"></div>
<span class="t" style="left:1178.6px;top:289.8px;font-size:11.2px;font-weight:400;color:#f0f0f0;-webkit-text-stroke:0.45px;transform:scaleX(0.8901);">100%</span>
<span class="t" style="left:1006px;top:317.2px;font-size:11.2px;font-weight:400;color:#f0f0f0;-webkit-text-stroke:0.45px;transform:scaleX(0.8965);">Lock:</span>
<svg class="abs" style="left:1037px;top:317px" width="12" height="12" viewBox="0 0 12 12"><rect x="0.3" y="0.3" width="11.4" height="11.4" rx="1" fill="#f2f2f2"/><g fill="#2a2a2a"><rect x="1.6" y="1.6" width="2.9" height="2.9"/><rect x="7.4" y="1.6" width="2.9" height="2.9"/><rect x="4.5" y="4.5" width="2.9" height="2.9"/><rect x="1.6" y="7.4" width="2.9" height="2.9"/><rect x="7.4" y="7.4" width="2.9" height="2.9"/></g></svg>
<svg class="abs" style="left:1057px;top:315px" width="15" height="16" viewBox="0 0 15 16"><path d="M13.2,1.4 L7.2,9.2" stroke="#ececec" stroke-width="2.3" stroke-linecap="round"/><path d="M5.2,9.2 L7.6,11.2 C7,13.6 4.2,15 0.8,14.8 C2.6,13.6 2.4,10.6 5.2,9.2Z" fill="#ececec"/></svg>
<svg class="abs" style="left:1078px;top:316px" width="14" height="14" viewBox="0 0 14 14"><path d="M7,1.6V12.4M1.6,7H12.4" stroke="#e6e6e6" stroke-width="1.2"/><path d="M7,0 L9.2,2.8H4.8Z M7,14 L9.2,11.2H4.8Z M0,7 L2.8,4.8V9.2Z M14,7 L11.2,4.8V9.2Z" fill="#e6e6e6"/></svg>
<svg class="abs" style="left:1098px;top:316px" width="16" height="14" viewBox="0 0 16 14"><rect x="3.6" y="3.6" width="9" height="7.4" fill="none" stroke="#e6e6e6" stroke-width="1.3"/><path d="M3.6,0.5V2.2M0.5,3.6H2.2M12.6,0.5V2.2M15.5,3.6H13.8M3.6,13.5V12M0.5,11H2.2M12.6,13.5V12M15.5,11H13.8M6.5,1.2H9.8M6.5,13H9.8" stroke="#e6e6e6" stroke-width="1.2"/><path d="M9,3.6 L12.6,7 V3.6Z" fill="#e6e6e6"/></svg>
<svg class="abs" style="left:1121px;top:315px" width="12" height="14" viewBox="0 0 12 14"><path d="M3.2,6.4 V4.4 a2.8,2.8 0 0 1 5.6,0 V6.4" fill="none" stroke="#e6e6e6" stroke-width="1.4"/><rect x="1" y="6.2" width="10" height="7" rx="1" fill="#e6e6e6"/><rect x="5.3" y="8.4" width="1.4" height="2.6" fill="#535353"/></svg>
<span class="t" style="left:1156.4px;top:317.2px;font-size:11.2px;font-weight:400;color:#f0f0f0;-webkit-text-stroke:0.45px;transform:scaleX(0.8725);">Fill:</span>
<div class="ibox" style="left:1176px;top:315px;width:30px;height:16px"></div>
<span class="t" style="left:1178.6px;top:317.2px;font-size:11.2px;font-weight:400;color:#f0f0f0;-webkit-text-stroke:0.45px;transform:scaleX(0.8901);">100%</span>
<div class="abs" style="left:1003px;top:338px;width:197px;height:31px;background:#535353;border-top:1px solid #474747;border-bottom:1px solid #444"></div>
<div class="abs" style="left:1003px;top:369px;width:197px;height:31px;background:#6b6b6b;border-bottom:1px solid #484848"></div>
<div class="abs" style="left:1003px;top:369px;width:27px;height:30px;background:#5a5a5a"></div>
<div class="abs" style="left:1030px;top:338px;width:1px;height:62px;background:#464646"></div>
<div class="abs" style="left:1009.5px;top:348.5px;width:11px;height:11px;border:1px solid #616161"></div>
<svg class="abs" style="left:1033.5px;top:342px" width="33" height="23" viewBox="0 0 33 23"><defs><pattern id="chk2" width="3" height="3" patternUnits="userSpaceOnUse"><rect width="3" height="3" fill="#fff"/><rect width="1.5" height="1.5" fill="#c4c4c4"/><rect x="1.5" y="1.5" width="1.5" height="1.5" fill="#c4c4c4"/></pattern></defs><rect width="33" height="23" fill="#1c1c1c"/><rect x="1.2" y="1.2" width="30.6" height="20.6" fill="url(#chk2)"/><path d="M3,5.6 C7,4.8 11,4.6 14.6,4.8 L21,8.2 C24,9.6 28,10.2 31.2,10.2 V19.8 C25,19 18,17.6 13.4,16.4 L7,9.8 C5.6,8.4 4,7.4 3,5.6Z" fill="#8e8e8e"/><path d="M3,5.6 C7,4.8 11,4.6 14.6,4.8 L21,8.2 L12,9.4 L7,9.8 C5.6,8.4 4,7.4 3,5.6Z" fill="#ababab"/><path d="M13.4,14.6 C19,15.4 25,15.8 31.2,15.8" stroke="#4a4a4a" stroke-width="1.1" fill="none"/><path d="M13.6,15.6 C19,16.4 25,16.8 31.2,16.8 V19.8 C25,19 18,17.6 13.4,16.4Z" fill="#b8b8b8"/></svg>
<span class="t" style="left:1073.6px;top:347.8px;font-size:11.2px;font-weight:400;color:#f0f0f0;-webkit-text-stroke:0.45px;transform:scaleX(0.8565);">Layer 1</span>
<svg class="abs" style="left:1009px;top:379px" width="14" height="10" viewBox="0 0 14 10"><path d="M0.4,5 C2.4,1.6 4.8,0.5 7,0.5 C9.2,0.5 11.6,1.6 13.6,5 C11.6,8.4 9.2,9.5 7,9.5 C4.8,9.5 2.4,8.4 0.4,5Z" fill="#f0f0f0"/><circle cx="7" cy="5" r="2.9" fill="#5a5a5a"/><circle cx="7" cy="5" r="1.3" fill="#f0f0f0"/></svg>
<svg class="abs" style="left:1032px;top:371px" width="36" height="27" viewBox="0 0 36 27"><rect x="1.8" y="2" width="32.4" height="23" fill="#151515"/><rect x="3" y="3.2" width="30" height="20.6" fill="url(#chk2)"/><clipPath id="l2c"><path d="M3.8,7.6 C8,6.6 12,6.5 16.2,6.7 L22.8,11.2 C25,12.4 28,12.9 32,12.9 V22 C26,21.4 19,19.8 14.6,18.6 L8.8,11.2 C7.4,10 5.4,9 3.8,7.6Z"/></clipPath><g clip-path="url(#l2c)"><rect x="0" y="0" width="36" height="27" fill="#0a0ab8"/><rect x="12.6" y="0" width="1.6" height="27" fill="#10a8e0"/><rect x="14.2" y="0" width="5" height="27" fill="#a0186a"/><rect x="16" y="0" width="0.9" height="27" fill="#d01840"/><rect x="19.2" y="0" width="1.6" height="27" fill="#1830b0"/><rect x="20.8" y="0" width="12" height="27" fill="#0e6e62"/><rect x="29.6" y="0" width="1.2" height="27" fill="#3a8a70"/><rect x="3" y="6" width="14" height="1.6" fill="#2060d8"/><rect x="13" y="18" width="20" height="1.5" fill="#f05030"/><rect x="20" y="20.6" width="12" height="0.8" fill="#7ad0e0"/><rect x="27" y="21.4" width="6" height="1" fill="#e04030"/></g><path d="M0.8,12.6V0.8H12.4M23.6,0.8H35.2V12.6M35.2,14.4V26.2H23.6M12.4,26.2H0.8V14.4" fill="none" stroke="#fff" stroke-width="1.6"/></svg>
<span class="t" style="left:1073.6px;top:378.6px;font-size:11.2px;font-weight:400;color:#f6f6f6;-webkit-text-stroke:0.45px;transform:scaleX(0.8940);">Layer 2</span>
<div class="abs" style="left:1003px;top:400px;width:197px;height:36px;background:#4f4f4f"></div>
<div class="hl" style="left:1003px;top:435px;width:197px;background:#424242"></div>
<svg class="abs" style="left:1032px;top:442px" width="16" height="10" viewBox="0 0 16 10"><g fill="none" stroke="#9a9a9a" stroke-width="1.4"><rect x="0.8" y="1.8" width="7.6" height="6.4" rx="3.2"/><rect x="7.6" y="1.8" width="7.6" height="6.4" rx="3.2"/></g><path d="M5,5H11" stroke="#9a9a9a" stroke-width="1.4"/></svg>
<span class="t" style="left:1060.4px;top:439px;font-size:14px;font-weight:400;color:#ececec;-webkit-text-stroke:0.2px;transform:scaleX(0.9918);font-style:italic;">fx</span>
<svg class="abs" style="left:1071px;top:452px" width="5" height="4" viewBox="0 0 5 4"><path d="M0,0H5L2.5,3.2Z" fill="#d8d8d8"/></svg>
<svg class="abs" style="left:1085px;top:441px" width="15" height="12" viewBox="0 0 15 12"><rect x="0.5" y="0.5" width="14" height="10.6" rx="1" fill="#e6e6e6"/><circle cx="7.5" cy="5.8" r="3.1" fill="#505050"/></svg>
<svg class="abs" style="left:1112px;top:440px" width="16" height="16" viewBox="0 0 16 16"><circle cx="6.8" cy="7" r="5.4" fill="none" stroke="#e6e6e6" stroke-width="1.3"/><path d="M3,10.8 A5.4,5.4 0 0 0 10.6,3.2Z" fill="#e6e6e6"/><path d="M11,12.6H15.4L13.2,15.4Z" fill="#d8d8d8"/></svg>
<svg class="abs" style="left:1137px;top:441px" width="15" height="12" viewBox="0 0 15 12"><path d="M0.5,1 H5.4 L6.8,2.6 H14.5 V11.5 H0.5Z" fill="#e6e6e6"/><path d="M0.5,3.6H14.5" stroke="#555" stroke-width="0.7"/></svg>
<svg class="abs" style="left:1164px;top:441px" width="13" height="13" viewBox="0 0 13 13"><rect x="0.8" y="0.8" width="11.4" height="11.4" rx="1" fill="none" stroke="#e6e6e6" stroke-width="1.5"/><path d="M6.5,3.6V9.4M3.6,6.5H9.4" stroke="#e6e6e6" stroke-width="1.5"/></svg>
<svg class="abs" style="left:1189px;top:440px" width="11" height="14" viewBox="0 0 11 14"><path d="M0.5,3.2H12M4,3V1.2H9V3" fill="none" stroke="#e6e6e6" stroke-width="1.3"/><path d="M1.8,4.4H12V12.6 a1,1 0 0 1 -1,1 H2.8 a1,1 0 0 1 -1,-1Z" fill="none" stroke="#e6e6e6" stroke-width="1.3"/><path d="M4.6,6V11.6M7,6V11.6M9.4,6V11.6" stroke="#e6e6e6" stroke-width="1"/></svg>
<div class="abs" style="left:1003px;top:459px;width:197px;height:2.5px;background:#343434"></div>
<div class="abs" style="left:1003px;top:461.5px;width:197px;height:5px;background:#4b4b4b"></div>
<div class="abs" style="left:1105px;top:462px;width:18px;height:2.5px;background:repeating-linear-gradient(90deg,#3c3c3c 0 1px,#4b4b4b 1px 2px)"></div>
<div class="abs" style="left:1011.6px;top:466.5px;width:23px;height:13.8px;background:#424242;border:1px solid #5c5c5c;border-top:none;border-radius:0 0 2px 2px"></div>
<svg class="abs" style="left:1018.4px;top:466.8px" width="9.4" height="9.4" viewBox="0 0 10 10"><path d="M3,2.2 a3.6,3.6 0 1 0 4,0" fill="none" stroke="#f0f0f0" stroke-width="1.4"/><path d="M5,0.4V4.6" stroke="#f0f0f0" stroke-width="1.4"/></svg>
<span class="t" style="left:1045.6px;top:473.6px;font-size:11.2px;font-weight:400;color:#f0f0f0;-webkit-text-stroke:0.45px;transform:scaleX(0.9148);">H</span>
<div class="ibox" style="left:1057px;top:471px;width:59px;height:16px"></div>
<span class="t" style="left:1061px;top:473.6px;font-size:11.2px;font-weight:400;color:#f4f4f4;-webkit-text-stroke:0.45px;transform:scaleX(0.9136);">7.98 cm</span>
<span class="t" style="left:1124px;top:473.6px;font-size:11.2px;font-weight:400;color:#f0f0f0;-webkit-text-stroke:0.45px;transform:scaleX(0.9370);">Y</span>
<div class="ibox" style="left:1135px;top:471px;width:59px;height:16px"></div>
<span class="t" style="left:1138.4px;top:473.6px;font-size:11.2px;font-weight:400;color:#f4f4f4;-webkit-text-stroke:0.45px;transform:scaleX(0.9311);">0 cm</span>
<svg class="abs" style="left:1038px;top:500px" width="15" height="13" viewBox="0 0 15 13"><path d="M12.2,1.6 L1.6,10.8 H14" fill="none" stroke="#e0e0e0" stroke-width="1.3" stroke-linejoin="round" stroke-linecap="round"/><path d="M7,6.4 a6,6 0 0 1 2.4,4.4" fill="none" stroke="#e0e0e0" stroke-width="1.1"/></svg>
<div class="ibox" style="left:1057px;top:498px;width:58px;height:17px"></div><div class="abs" style="left:1099px;top:499px;width:1px;height:15px;background:#636363"></div>
<span class="t" style="left:1061px;top:501.2px;font-size:11.2px;font-weight:400;color:#f4f4f4;-webkit-text-stroke:0.45px;transform:scaleX(0.9665);">0.00°</span>
<svg class="abs" style="left:1104px;top:505px" width="8" height="5.5" viewBox="-1 -1 8 5.5"><path d="M0,0 L3.0,3.5 L6,0" fill="none" stroke="#e0e0e0" stroke-width="1.4" stroke-linecap="round" stroke-linejoin="round"/></svg>
<svg class="abs" style="left:1140px;top:499px" width="17" height="15" viewBox="0 0 17 15"><path d="M1.6,3 L6,7.2 L1.6,11.4Z" fill="none" stroke="#e6e6e6" stroke-width="1.2" stroke-linejoin="round"/><path d="M15.6,3 L11,7.2 L15.6,11.4Z" fill="#e6e6e6"/><path d="M8.4,0V15" stroke="#e6e6e6" stroke-width="0.9" stroke-dasharray="1.3 1.1"/></svg>
<svg class="abs" style="left:1174px;top:498px" width="15" height="17" viewBox="0 0 15 17"><path d="M3.4,1.4 L7.4,5.8 L11.4,1.4Z" fill="none" stroke="#e6e6e6" stroke-width="1.2" stroke-linejoin="round"/><path d="M3,15.6 L7.4,11 L11.8,15.6Z" fill="#e6e6e6"/><path d="M0,8.4H15" stroke="#e6e6e6" stroke-width="0.9" stroke-dasharray="1.3 1.1"/></svg>
<div class="hl" style="left:1003px;top:529px;width:197px;background:#464646"></div>
<svg class="abs" style="left:1010px;top:542px" width="9" height="6" viewBox="-1 -1 9 6"><path d="M0,0 L3.5,4 L7,0" fill="none" stroke="#e0e0e0" stroke-width="1.4" stroke-linecap="round" stroke-linejoin="round"/></svg>
<span class="t" style="left:1023.6px;top:538.6px;font-size:11.2px;font-weight:700;color:#f4f4f4;transform:scaleX(0.9153);">Align and Distribute</span>
<span class="t" style="left:1011px;top:559.8px;font-size:11.2px;font-weight:400;color:#f0f0f0;-webkit-text-stroke:0.45px;transform:scaleX(0.9279);">Align:</span>
<svg class="abs" style="left:1016px;top:584.5px" width="15" height="15" viewBox="0 0 15 15" fill="#bdbdbd" stroke="#ececec" stroke-width="1.3"><path d="M1,0V15"/><rect x="3.4" y="2.4" width="6.2" height="3.6"/><rect x="3.4" y="9" width="9.6" height="3.6"/></svg>
<svg class="abs" style="left:1043.5px;top:584.5px" width="15" height="15" viewBox="0 0 15 15" fill="#bdbdbd" stroke="#ececec" stroke-width="1.3"><path d="M7.5,0V15"/><rect x="4.2" y="2.4" width="6.6" height="3.6" fill="#e6e6e6"/><rect x="2.2" y="9" width="10.6" height="3.6" fill="#e6e6e6"/></svg>
<svg class="abs" style="left:1071px;top:584.5px" width="15" height="15" viewBox="0 0 15 15" fill="#bdbdbd" stroke="#ececec" stroke-width="1.3"><path d="M14,0V15"/><rect x="5.4" y="2.4" width="6.2" height="3.6"/><rect x="2" y="9" width="9.6" height="3.6"/></svg>
<svg class="abs" style="left:1116px;top:584.5px" width="15" height="15" viewBox="0 0 15 15" fill="#bdbdbd" stroke="#ececec" stroke-width="1.3"><path d="M0,1H15"/><rect x="2.4" y="3.4" width="3.6" height="9.6"/><rect x="9" y="3.4" width="3.6" height="6.2"/></svg>
<svg class="abs" style="left:1143.5px;top:584.5px" width="15" height="15" viewBox="0 0 15 15" fill="#bdbdbd" stroke="#ececec" stroke-width="1.3"><path d="M0,7.5H15"/><rect x="2.4" y="2.2" width="3.6" height="10.6" fill="#e6e6e6"/><rect x="9" y="4.2" width="3.6" height="6.6" fill="#e6e6e6"/></svg>
<svg class="abs" style="left:1172px;top:584.5px" width="15" height="15" viewBox="0 0 15 15" fill="#bdbdbd" stroke="#ececec" stroke-width="1.3"><path d="M0,14H15"/><rect x="2.4" y="2" width="3.6" height="9.6"/><rect x="9" y="5.4" width="3.6" height="6.2"/></svg>
<div class="abs" style="left:1177px;top:620px;width:3px;height:3px;border-radius:50%;background:#e6e6e6"></div>
<div class="abs" style="left:1182px;top:620px;width:3px;height:3px;border-radius:50%;background:#e6e6e6"></div>
<div class="abs" style="left:1187px;top:620px;width:3px;height:3px;border-radius:50%;background:#e6e6e6"></div>
<div class="hl" style="left:1003px;top:635px;width:197px;background:#464646"></div>
<svg class="abs" style="left:1010px;top:648px" width="9" height="6" viewBox="-1 -1 9 6"><path d="M0,0 L3.5,4 L7,0" fill="none" stroke="#e0e0e0" stroke-width="1.4" stroke-linecap="round" stroke-linejoin="round"/></svg>
<span class="t" style="left:1023.6px;top:644.6px;font-size:11.2px;font-weight:700;color:#f4f4f4;transform:scaleX(0.8999);">Quick Actions</span>
<div class="btn" style="top:667px"></div>
<span class="t" style="left:1055px;top:671.8px;font-size:11.2px;font-weight:400;color:#f4f4f4;-webkit-text-stroke:0.45px;transform:scaleX(0.8987);">Remove Background</span>
<div class="btn" style="top:696px"></div>
<span class="t" style="left:1068.6px;top:700.6px;font-size:11.2px;font-weight:400;color:#f4f4f4;-webkit-text-stroke:0.45px;transform:scaleX(0.9413);">Select Subject</span>
<span class="t" style="left:1078px;top:728.6px;font-size:11.2px;font-weight:400;color:#f4f4f4;-webkit-text-stroke:0.45px;transform:scaleX(0.9297);text-decoration:underline;text-underline-offset:1.5px;">View More</span>
<div class="abs" style="left:1003px;top:770px;width:197px;height:29px;background:linear-gradient(#535353,#4c4c4c)"></div>
<div class="abs" style="left:0;top:799px;width:1200px;height:1px;background:#1e1e1e"></div>
<div class="abs" style="left:985px;top:784px;width:15px;height:15px;background:#555"></div>
</body></html>
